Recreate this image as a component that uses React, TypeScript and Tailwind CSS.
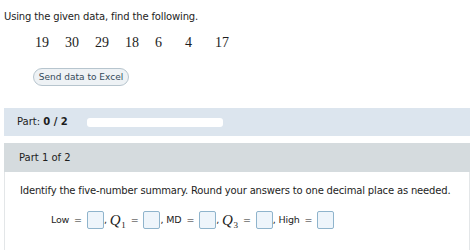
import React from 'react';

const DATA = [19, 30, 29, 18, 6, 4, 17];

const Box = () => (
  <span className="inline-block w-[17px] h-[18px] rounded-[2px] border border-[#8fb4cc] bg-[#eef5fb]" />
);

const Q = ({ sub }: { sub: string }) => (
  <span className="ml-[3px] flex items-end font-['Liberation_Serif',serif] italic text-[15px] leading-none">
    Q<span className="not-italic text-[9px] leading-none mb-[-2px] ml-[1px]">{sub}</span>
  </span>
);

const Eq = () => <span className="mx-[5px]">=</span>;

export default function App() {
  return (
    <div className="w-[474px] h-[250px] overflow-hidden bg-white text-[#1d1d1d] font-['DejaVu_Sans',Verdana,sans-serif] text-[10px]">
      <div className="px-[4px]">
        <p className="pt-[10px] leading-[14px] text-[10px] tracking-[-0.15px]">
          Using the given data, find the following.
        </p>

        <div className="mt-[10px] ml-[31px] flex font-['Liberation_Serif',serif] text-[14px] leading-[17px]">
          {DATA.map((n, i) => (
            <span key={i} className="w-[30px]">
              {n}
            </span>
          ))}
        </div>

        <button className="mt-[17px] ml-[29px] h-[18px] w-[96px] rounded-full border border-[#b7c5ce] bg-[#eef2f5] text-[9px] text-[#33495a] leading-none">
          Send data to Excel
        </button>

        {/* Progress */}
        <div className="mt-[22px] h-[28px] bg-[#dce5ee] flex items-center pl-[13px]">
          <span className="leading-none">
            Part: <b>0 / 2</b>
          </span>
          <div className="ml-[19px] w-[136px] h-[9px] rounded-[3px] bg-white" />
        </div>

        <div className="mt-[7px] h-[29px] bg-[#d5dbde] flex items-center pl-[15px]">
          <span className="leading-none">Part 1 of 2</span>
        </div>

        <div className="border-x border-[#e3e6e8] h-[100px] pl-[15px]">
          <p className="pt-[12px] leading-[14px] tracking-[-0.17px]">
            Identify the five-number summary. Round your answers to one decimal place as needed.
          </p>
          <div className="mt-[13px] ml-[31px] flex items-center h-[18px] text-[9.5px] tracking-[-0.2px]">
            <span>Low</span>
            <Eq />
            <Box />
            <span>,</span>
            <Q sub="1" />
            <Eq />
            <Box />
            <span>,</span>
            <span className="ml-[3px]">MD</span>
            <Eq />
            <Box />
            <span>,</span>
            <Q sub="3" />
            <Eq />
            <Box />
            <span>,</span>
            <span className="ml-[3px]">High</span>
            <Eq />
            <Box />
          </div>
        </div>
      </div>
    </div>
  );
}
